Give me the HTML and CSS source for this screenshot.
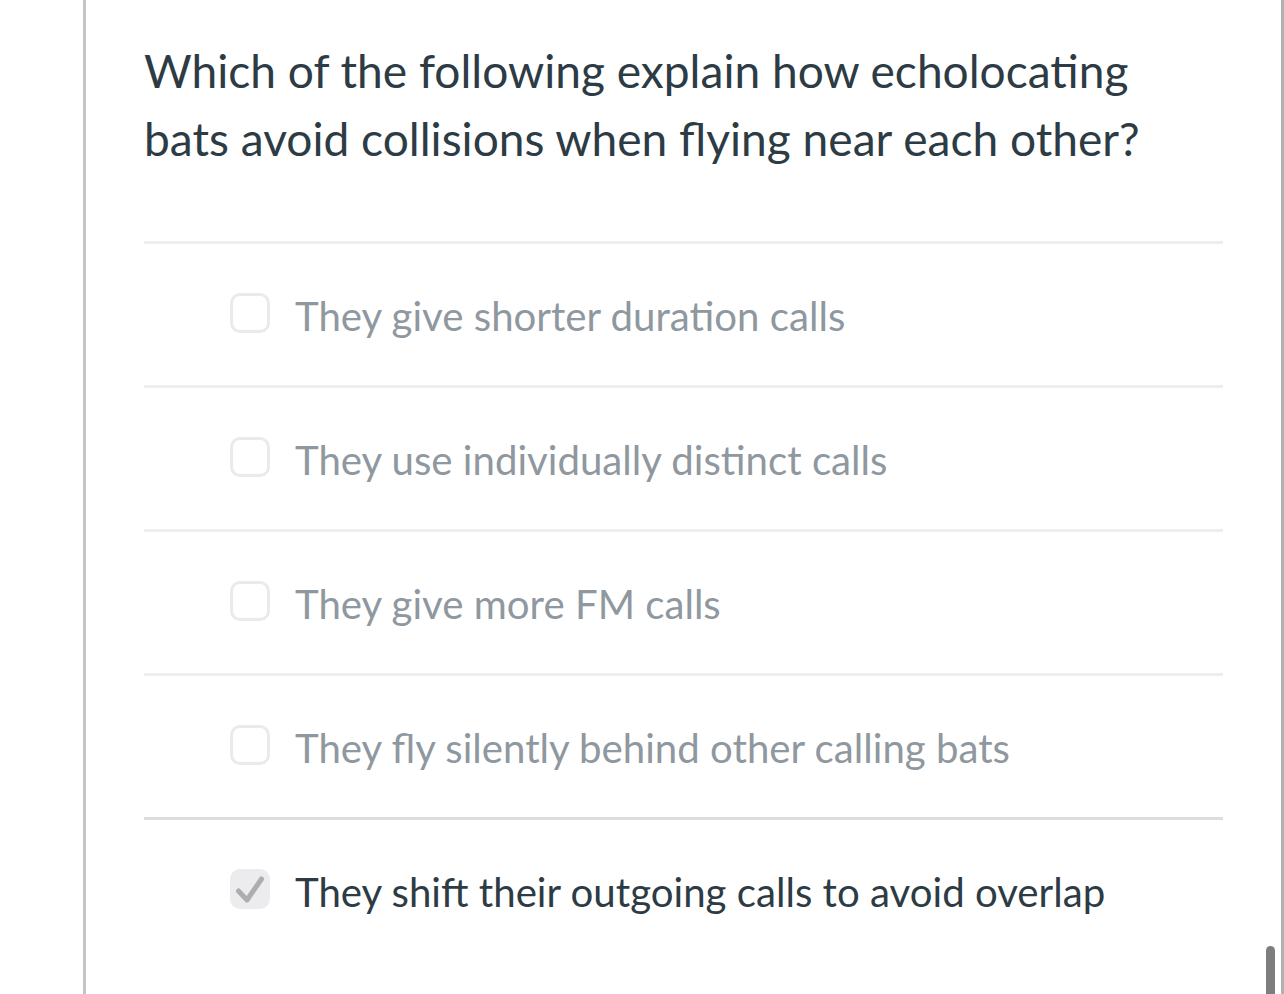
FILE: index.html
```html
<!DOCTYPE html>
<html>
<head>
<meta charset="utf-8">
<link rel="stylesheet" href="styles.css">
</head>
<body>
<div class="frame">
  <div class="question">Which of the following explain how echolocating bats avoid collisions when flying near each other?</div>
  <ul class="answers">
    <li class="answer">
      <span class="box"></span>
      <span class="label">They give shorter duration calls</span>
    </li>
    <li class="answer">
      <span class="box"></span>
      <span class="label">They use individually distinct calls</span>
    </li>
    <li class="answer">
      <span class="box"></span>
      <span class="label">They give more FM calls</span>
    </li>
    <li class="answer">
      <span class="box"></span>
      <span class="label">They fly silently behind other calling bats</span>
    </li>
    <li class="answer selected">
      <span class="box checked">
        <svg viewBox="0 0 40 40" width="40" height="40"><path d="M8.5 22 L17 31 L31.5 10" fill="none" stroke="#adadb1" stroke-width="5" stroke-linecap="round" stroke-linejoin="round"/></svg>
      </span>
      <span class="label">They shift their outgoing calls to avoid overlap</span>
    </li>
  </ul>
  <div class="scroll-thumb"></div>
</div>
</body>
</html>
```
FILE: styles.css
```css
html, body {
  margin: 0;
  padding: 0;
  background: #ffffff;
}
body {
  font-family: Lato, "Noto Sans", sans-serif;
  height: 994px;
  overflow: hidden;
}
.frame {
  position: relative;
  margin-left: 83px;
  width: 1201px;
  height: 994px;
  border-left: 3px solid #c4c4c4;
  border-right: 3px solid #b0b0b0;
  padding: 36px 58px 0 58px;
  box-sizing: border-box;
}
.question {
  font-size: 46.1px;
  line-height: 68px;
  color: #2d3b45;
  margin-bottom: 69px;
}
.answers {
  list-style: none;
  margin: 0;
  padding: 0;
}
.answer {
  display: flex;
  align-items: center;
  height: 144px;
  box-sizing: border-box;
  border-top: 3px solid #eeeeee;
  padding-left: 86px;
  padding-bottom: 4px;
}
.answer.selected {
  border-top-color: #dddddd;
}
.box {
  width: 40px;
  height: 40px;
  box-sizing: border-box;
  border: 3px solid #e9eaec;
  border-radius: 10px;
  flex: none;
  margin-right: 25px;
}
.box.checked {
  border: none;
  background: #ececee;
  display: flex;
}
.label {
  font-size: 40.2px;
  color: #8f989f;
  padding-top: 6px;
}
.selected .label {
  color: #2d3b45;
}
.scroll-thumb {
  position: absolute;
  right: 6px;
  top: 946px;
  width: 9px;
  height: 60px;
  border-radius: 5px 5px 0 0;
  background: #7d7d7d;
}
```
